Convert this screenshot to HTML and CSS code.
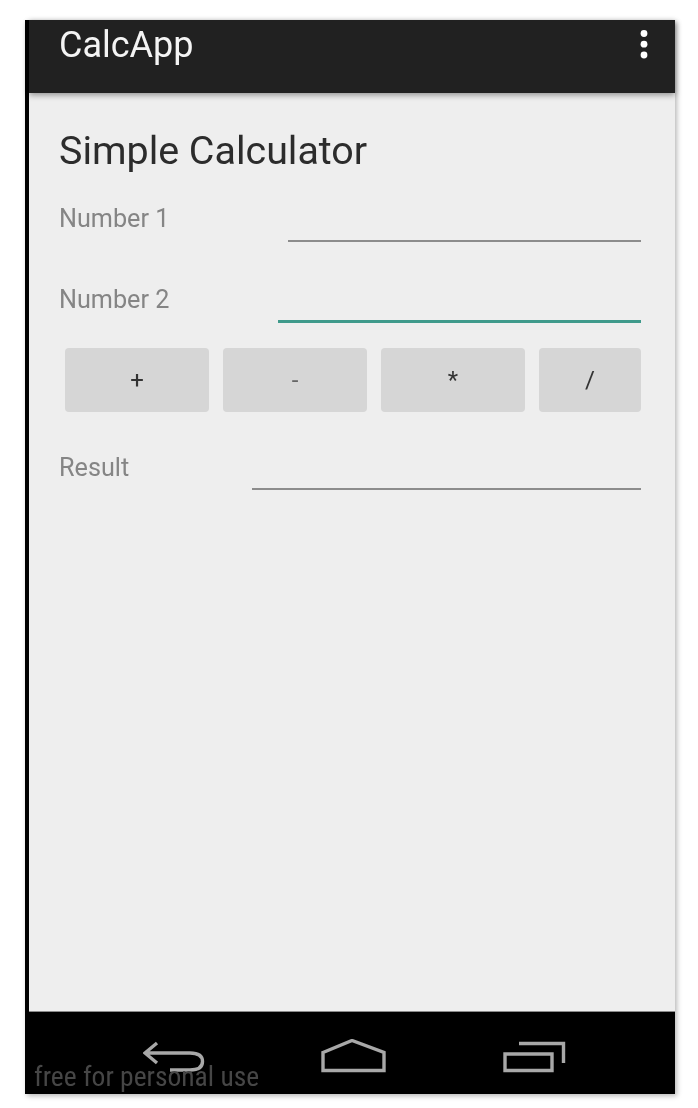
FILE: index.html
```html
<!DOCTYPE html>
<html lang="en">
<head>
<meta charset="utf-8">
<title>CalcApp</title>
<link rel="stylesheet" href="styles.css">
</head>
<body>
<div class="phone">
  <header class="appbar">
    <span class="app-title">CalcApp</span>
    <svg class="overflow" width="8" height="32" viewBox="0 0 8 32"><circle cx="4" cy="4.500" r="3.400"/><circle cx="4" cy="15.200" r="3.400"/><circle cx="4" cy="26" r="3.400"/></svg>
  </header>
  <main class="content">
    <h1 class="heading">Simple Calculator</h1>
    <div class="row row-one"><label class="label">Number 1</label><div class="field"></div></div>
    <div class="row row-two"><label class="label">Number 2</label><div class="field focused"></div></div>
    <div class="ops">
      <button class="op">+</button>
      <button class="op minus">-</button>
      <button class="op">*</button>
      <button class="op">/</button>
    </div>
    <div class="row row-result"><label class="label">Result</label><div class="field"></div></div>
  </main>
  <nav class="navbar">
    <svg class="nav-icon" width="62" height="34" viewBox="0 0 62 34" fill="none"><path d="M14 4 2 14 14 24M2 14H47C55 14 59.500 17 59.500 22.500C59.500 28 55 31 47 31H27"/></svg>
    <svg class="nav-icon" width="66" height="36" viewBox="0 0 66 36" fill="none"><path d="M2 13.500 31 1.500 63 13.500V31.500H2Z"/></svg>
    <svg class="nav-icon" width="64" height="34" viewBox="0 0 64 34" fill="none"><path d="M2 15H49V31.500H2ZM16 4.500H60.500V24"/></svg>
    <span class="watermark">free for personal use</span>
  </nav>
</div>
</body>
</html>
```
FILE: styles.css
```css
* { box-sizing: border-box; }
html, body { margin: 0; background: #fff; }
body { padding: 20px 0 0 25px; height: 1108px; overflow: hidden; font-family: Roboto, "Liberation Sans", sans-serif; }

.phone {
  position: relative;
  width: 650px;
  height: 1074px;
  display: flex;
  flex-direction: column;
  border-left: 4px solid #000;
  background: #eee;
  box-shadow: 2px 2px 5px rgba(0,0,0,.28);
}

.appbar {
  position: relative;
  flex: 0 0 73px;
  display: flex;
  justify-content: space-between;
  padding: 6px 27px 0 30px;
  background: #212121;
  box-shadow: 0 2px 6px rgba(0,0,0,.4);
}
.app-title { color: #f4f4f4; font-size: 36px; line-height: 38px; filter: blur(.6px); }
.overflow { fill: #fff; margin-top: 3px; filter: blur(.5px); }

.content { flex: 1; padding: 32px 34px 0 30px; }
.heading { margin: 0; font-size: 39.400px; font-weight: 400; line-height: 52px; color: #2c2c2c; filter: blur(.6px); }

.row { display: flex; align-items: flex-end; }
.row-one { height: 65px; }
.row-two { height: 81px; }
.row-result { height: 78px; }
.row-one .label { flex: 0 0 229px; }
.row-two .label { flex: 0 0 219px; }
.row-result .label { flex: 0 0 193px; padding-bottom: 7px; }
.label { margin-top: auto; padding-bottom: 8px; font-size: 25.200px; line-height: 30px; color: #858585; filter: blur(.6px); }
.field { flex: 1; height: 2px; background: #8c8c8c; filter: blur(.3px); }
.field.focused { height: 3px; background: #3f9a8b; }

.ops { display: grid; grid-template-columns: 144px 144px 144px 102px; gap: 14px; margin: 25px 0 0 6px; }
.op { height: 64px; padding: 0; border: 0; border-radius: 4px; background: #d6d6d6; color: #333; font: 400 24px Roboto, "Liberation Sans", sans-serif; filter: blur(.3px); }
.op.minus { color: #666; }

.navbar {
  position: relative;
  flex: 0 0 83px;
  display: flex;
  align-items: flex-start;
  padding: 27px 0 0 114px;
  gap: 116px;
  background: #000;
  border-top: 1px solid #8a8a8a;
}
.nav-icon { stroke: #a8a8a8; stroke-width: 3.400; filter: blur(.6px); }
.watermark {
  position: absolute;
  left: 5px;
  bottom: 1px;
  color: #464646;
  font-size: 27.500px;
  line-height: 32px;
  font-stretch: condensed;
  filter: blur(.7px);
}
```
